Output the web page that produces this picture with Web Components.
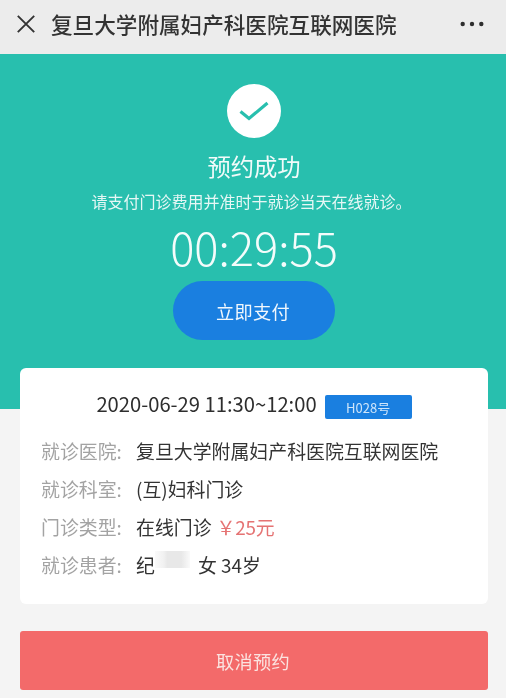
<!DOCTYPE html>
<html lang="zh-CN">
<head>
<meta charset="utf-8">
<style>
html,body{margin:0;padding:0;background:#f4f4f4;}
body{width:506px;height:698px;overflow:hidden;font-family:"Noto Sans CJK SC","Noto Sans",sans-serif;}
</style>
</head>
<body>
<app-page></app-page>
<template id="t-nav">
<style>
:host{display:flex;align-items:center;height:54px;background:#ececec;color:#2e2e2e;box-sizing:border-box;padding:0 22px 6px 17px;}
svg{display:block;flex:none}
.t{flex:1;margin-left:16px;font-size:21.6px;line-height:48px;font-weight:500;white-space:nowrap;color:#333;}
</style>
<svg width="18" height="18" viewBox="0 0 18 18"><path d="M.8.8 17.2 17.2M17.2.8.8 17.2" stroke="#333" stroke-width="1.9" fill="none"/></svg>
<span class="t"><slot></slot></span>
<svg width="24" height="6" viewBox="0 0 24 6"><circle cx="2.7" cy="3" r="2.2" fill="#2e2e2e"/><circle cx="12" cy="3" r="2.2" fill="#2e2e2e"/><circle cx="21.3" cy="3" r="2.2" fill="#2e2e2e"/></svg>
</template>
<template id="t-hero">
<style>
:host{display:flex;flex-direction:column;align-items:center;height:355px;box-sizing:border-box;padding:30px 0 0 2px;background:#28bfae;color:#fff;}
.c{width:54px;height:54px;border-radius:50%;background:#fff;display:flex;align-items:center;justify-content:center;}
svg{display:block}
.h{margin-top:12px;font-size:23.3px;line-height:32px;color:#f2fbfa;}
.s{margin:7px 0 0 -5px;font-size:16px;line-height:24px;color:#e6f7f5;white-space:nowrap;}
.n{margin-top:6px;font-size:45.2px;font-weight:300;line-height:56px;color:#f4fcfb;}
.b{margin-top:6px;width:162px;height:59px;border-radius:30px;background:#1a7fe0;display:flex;align-items:center;justify-content:center;box-sizing:border-box;padding-right:2px;font-size:18.2px;color:#f0f7fd;letter-spacing:.3px}
</style>
<div class="c"><svg width="30" height="20" viewBox="0 0 30 20"><path d="M1.5 10.5 10 17.5 28.5 2" stroke="#28bfae" stroke-width="3.2" fill="none"/></svg></div>
<div class="h">预约成功</div>
<div class="s">请支付门诊费用并准时于就诊当天在线就诊。</div>
<div class="n">00:29:55</div>
<div class="b">立即支付</div>
</template>
<template id="t-row">
<style>
:host{display:flex;font-size:18.9px;line-height:38px;height:37.9px;white-space:nowrap;color:#333;}
.l{color:#a3a3a3;width:95px;flex:none;}
</style>
<span class="l" id="l"></span><span><slot></slot></span>
</template>
<template id="t-card">
<style>
:host{display:block;position:relative;z-index:1;margin:-41px 18px 0 20px;height:236px;box-sizing:border-box;padding:17px 21px 0;background:#fff;border-radius:6px;}
.d{display:flex;align-items:center;justify-content:center;gap:8px;height:36px;margin-bottom:11px;font-size:20.2px;color:#2e2e2e;white-space:nowrap;}
.tag{width:87px;height:24px;margin-top:8px;border-radius:2px;background:#1a7fe0;color:#cfe5fa;font-size:13px;display:flex;align-items:center;justify-content:center;}
</style>
<div class="d"><span id="date"></span><span class="tag" id="tag"></span></div>
<slot></slot>
</template>
<template id="t-cancel">
<style>
:host{display:flex;align-items:center;justify-content:center;height:59px;margin:27px 18px 0 20px;padding-right:2px;border-radius:3px;background:#f36a6a;color:#fbe3e0;font-size:18.2px;letter-spacing:.3px}
</style>
<slot></slot>
</template>
<template id="t-page">
<style>
:host{display:block;width:506px;height:698px;overflow:hidden;background:#f4f4f4;filter:blur(.45px);}
.m{display:inline-block;width:35px;height:17px;margin:0 8px 0 0;vertical-align:5px;background:linear-gradient(90deg,#fafafa 0,#f1f1f1 25%,#e8e8e8 35%,#e8e8e8 75%,#fafafa 100%);}
.p{color:#e57373;margin-left:5px;letter-spacing:-.2px}
</style>
<nav-bar>复旦大学附属妇产科医院互联网医院</nav-bar>
<status-hero></status-hero>
<info-card date="2020-06-29 11:30~12:00" tag="H028号">
<info-row label="就诊医院:">复旦大学附属妇产科医院互联网医院</info-row>
<info-row label="就诊科室:">(互)妇科门诊</info-row>
<info-row label="门诊类型:">在线门诊<span class="p">￥25元</span></info-row>
<info-row label="就诊患者:">纪<span class="m"></span>女 34岁</info-row>
</info-card>
<cancel-button>取消预约</cancel-button>
</template>
<script>
function def(name,tid,init){
  customElements.define(name,class extends HTMLElement{
    constructor(){super();this.attachShadow({mode:"open"}).appendChild(document.getElementById(tid).content.cloneNode(true));}
    connectedCallback(){if(init)init(this,this.shadowRoot);}
  });
}
def("nav-bar","t-nav");
def("status-hero","t-hero");
def("info-row","t-row",(h,s)=>{s.getElementById("l").textContent=h.getAttribute("label");});
def("info-card","t-card",(h,s)=>{s.getElementById("date").textContent=h.getAttribute("date");s.getElementById("tag").textContent=h.getAttribute("tag");});
def("cancel-button","t-cancel");
def("app-page","t-page");
</script>
</body>
</html>
